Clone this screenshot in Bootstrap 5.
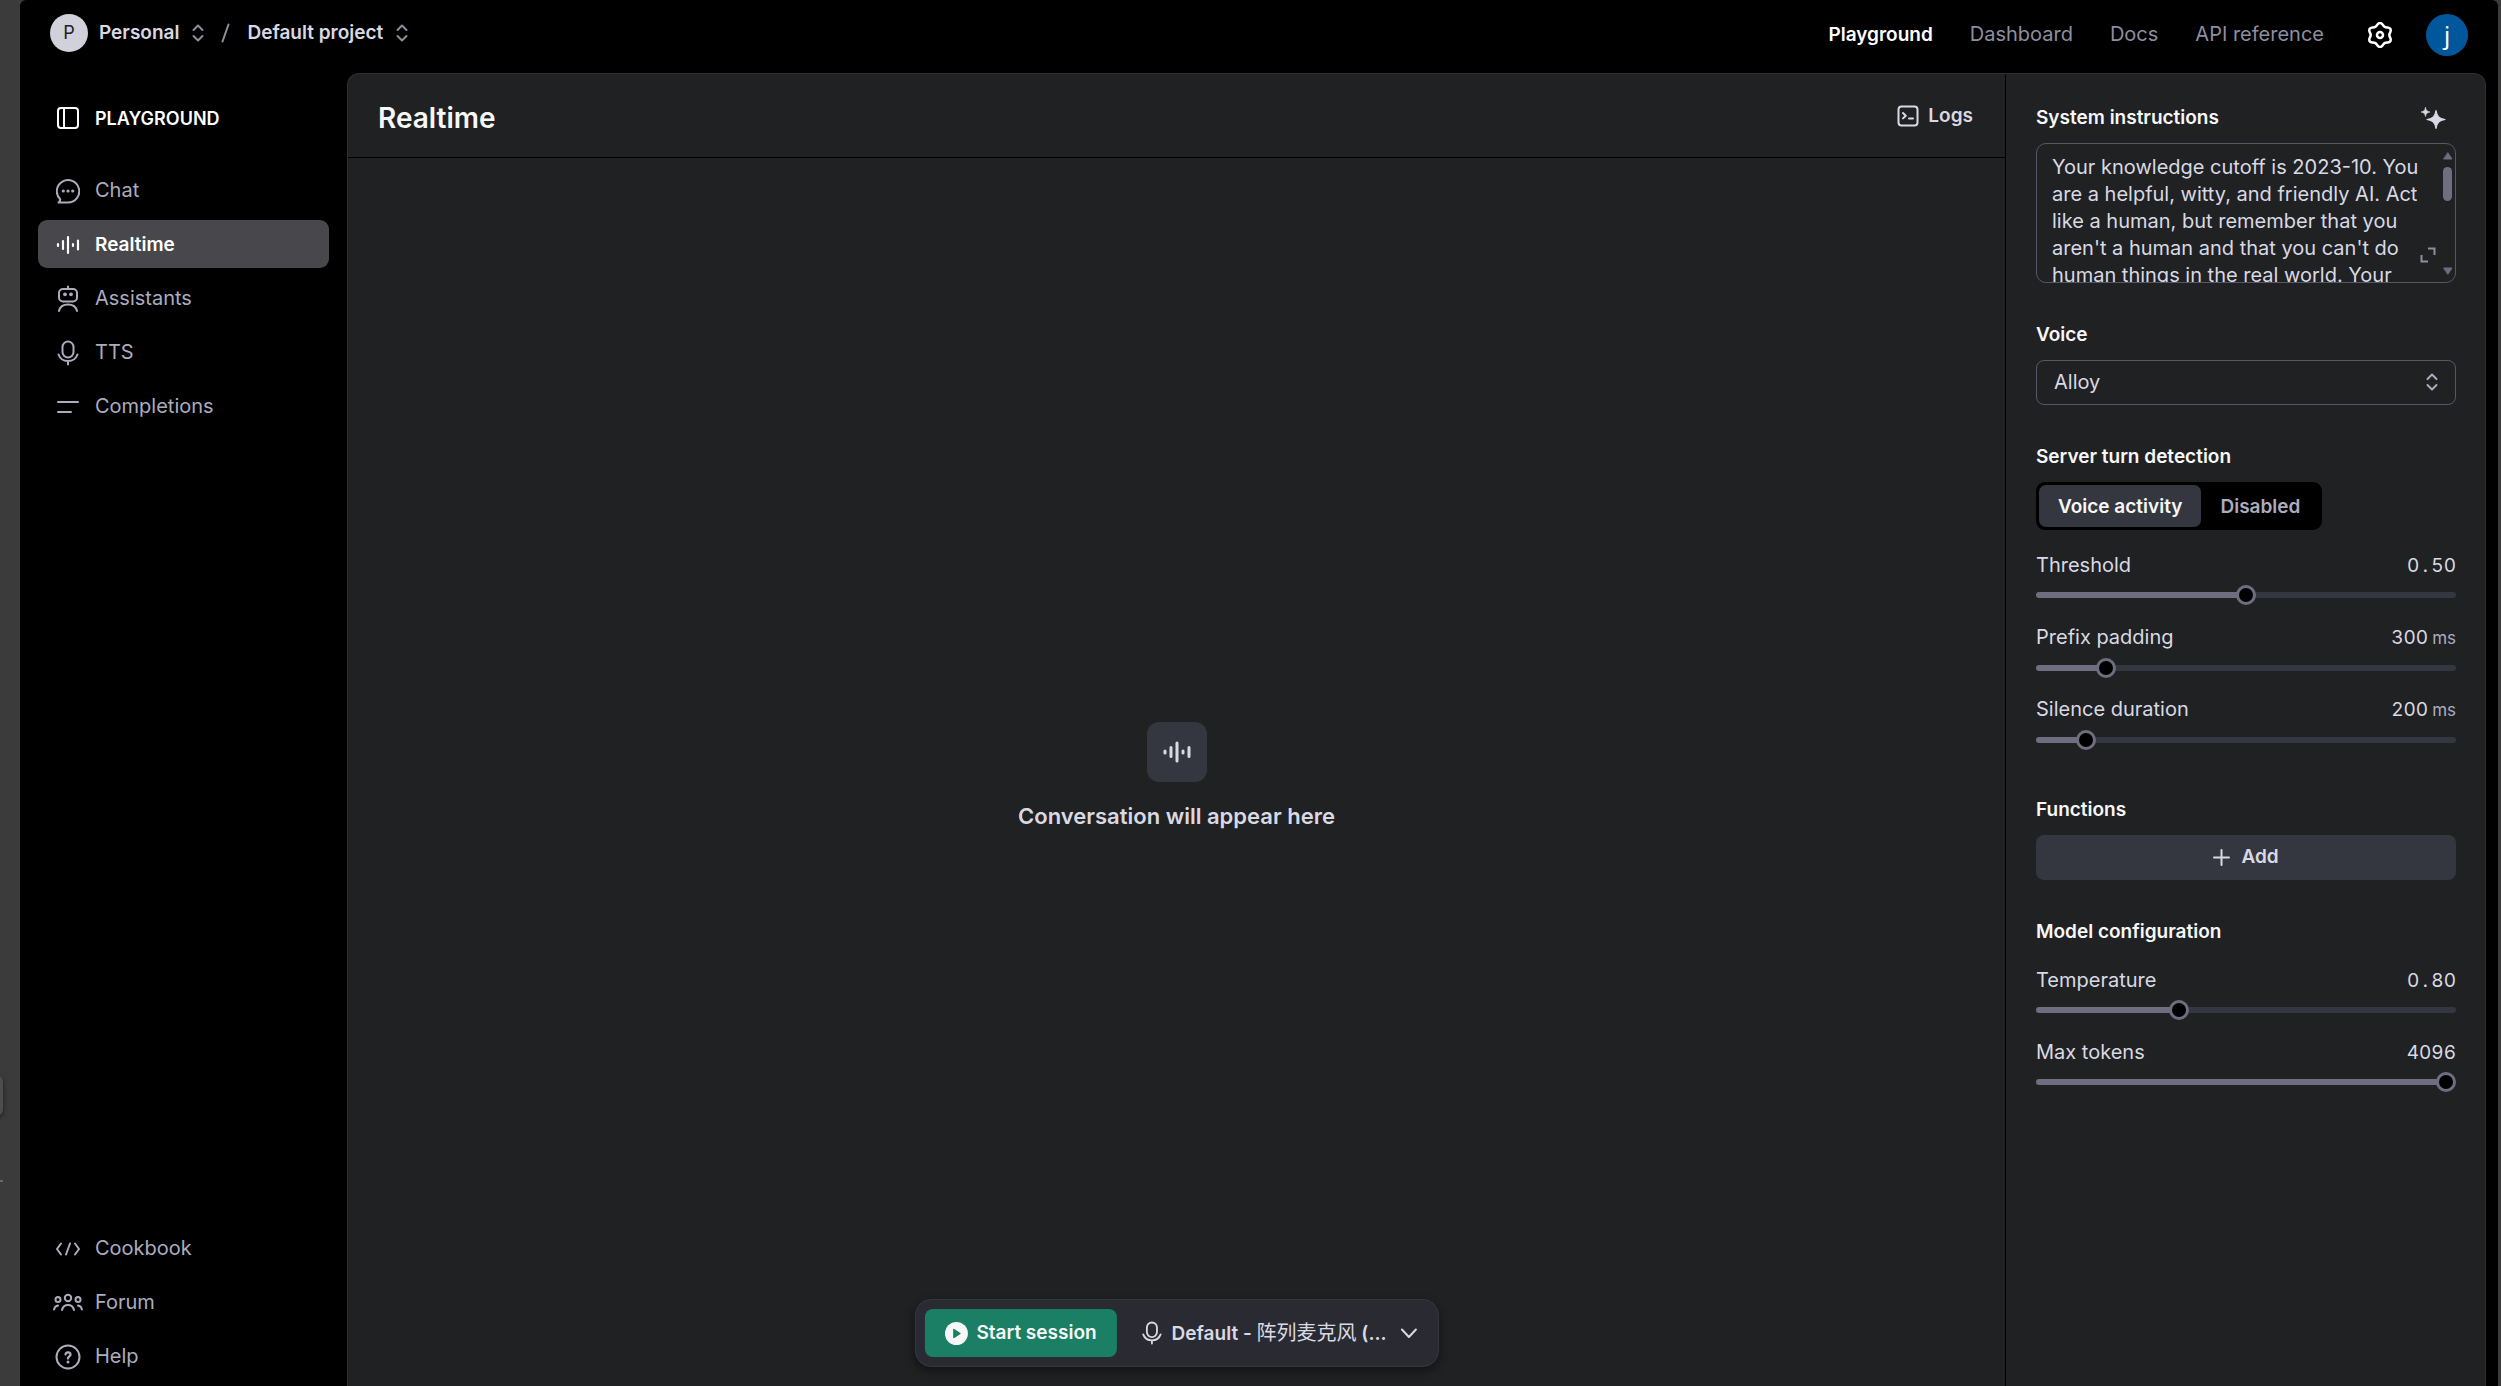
<!DOCTYPE html>
<html lang="en" data-bs-theme="dark">
<head>
<meta charset="utf-8">
<meta name="viewport" content="width=device-width, initial-scale=1">
<title>Playground - Realtime</title>
<link href="https://cdn.jsdelivr.net/npm/bootstrap@5.3.0/dist/css/bootstrap.min.css" rel="stylesheet">
<style>
  :root { --ink: #d9d9e3; --muted: #acacbe; --dim: #8e8ea0; --bright: #f7f7f8; --surface: #202123; --raised: #353740; --line: #565869; --fill: #6e6e80; }
  body { background: #3b3b3b; color: var(--ink); font: 400 20px/27px Inter, "Noto Sans CJK SC", sans-serif; }
  svg { display: block; flex: none; fill: none; stroke: currentColor; stroke-width: 2; stroke-linecap: round; stroke-linejoin: round; }
  svg.solid { fill: currentColor; stroke: none; }
  svg.bold-line { stroke-width: 3; }
  a { color: inherit; text-decoration: none; }
  .semi { font-size: 19px; font-weight: 600; }
  .app-shell { min-height: 100vh; margin: 0 3px 0 20px; background: #000; border-radius: 6px 6px 0 0; }
  .plain-btn { background: none; border: 0; padding: 0; color: inherit; }

  .top-bar { height: 73px; padding: 0 30px 8px; }
  .org-avatar { width: 38px; height: 38px; background: #d1d1db; color: #202123; font-size: 18px; margin-right: 11px; }
  .user-avatar { width: 42px; height: 42px; background: #00579b; color: #fff; font-family: "Noto Sans", sans-serif; font-size: 24px; }
  .crumb { gap: 13px; }
  .crumb svg { color: var(--dim); }
  .top-right { gap: 33px; padding-top: 4px; }
  .top-links { gap: 37px; margin-right: 10px; color: var(--dim); }
  .top-links .semi { color: #fff; }

  .side-nav { width: 327px; padding: 21px 18px 6px; color: var(--muted); }
  .side-head { height: 48px; padding-left: 18px; gap: 15px; color: #fff; font-size: 18px; font-weight: 600; margin-bottom: 24px; }
  .side-links { gap: 6px; }
  .side-links a { height: 48px; padding: 1px 0 0 18px; gap: 15px; border-radius: 9px; }
  .side-links a.active { background: #47474c; color: #fff; }

  .work-panel { background: var(--surface); border: 1px solid #2d2e36; border-bottom: 0; border-radius: 12px 12px 0 0; margin-right: 12px; }
  .pane-head { height: 84px; padding: 4px 32px 0 30px; border-bottom: 1px solid #000; }
  .pane-head h1 { font-size: 28px; line-height: 36px; font-weight: 600; color: var(--bright); }
  .log-btn { gap: 9px; }
  .empty-box { padding-top: 8px; }
  .empty-tile { width: 60px; height: 60px; border-radius: 12px; background: var(--raised); }
  .empty-text { font-size: 22px; font-weight: 600; margin-top: 21px; }
  .session-bar { bottom: 19px; height: 68px; padding: 0 9px; border: 1px solid #353740; border-radius: 16px; background: #2a2b32; box-shadow: 0 4px 10px rgba(0,0,0,.45); }
  .start-btn { height: 48px; padding: 0 20px; gap: 9px; border-radius: 8px; background: #1a7f64; color: var(--bright); }
  .start-btn:hover { background: #1a7f64; color: var(--bright); }
  .mic-btn { gap: 9px; padding: 0 11px 0 24px; white-space: nowrap; }
  .mic-btn .chev { margin-left: 4px; }
  .cjk { font-size: 20px; font-weight: 400; }

  .config-pane { width: 480px; padding: 30px 29px 30px 30px; border-left: 1px solid #000; }
  .config-pane section + section { margin-top: 38px; }
  .sec-title { display: block; font-size: 19px; line-height: 27px; font-weight: 600; color: var(--bright); margin: 0 0 12px; }
  .spark-btn { margin-right: 10px; }
  .field { border: 1px solid var(--line); border-radius: 8px; background: transparent; color: var(--ink); box-shadow: none; font-size: 20px; line-height: 27px; }
  textarea.field { height: 140px; padding: 10px 26px 0 15px; resize: none; overflow: hidden; border-radius: 10px; }
  select.field { height: 45px; padding: 0 40px 0 17px; background-image: none; }
  .over-scroll { position: absolute; top: 9px; right: 3px; color: var(--fill); }
  .over-grow { position: absolute; right: 20px; bottom: 20px; color: var(--dim); }
  .over-chev { position: absolute; right: 18px; top: 13px; color: var(--muted); pointer-events: none; }
  .seg-box { background: #000; border-radius: 9px; padding: 3px; margin-bottom: 22px; }
  .seg-box label { height: 42px; padding: 0 19px; border-radius: 7px; color: var(--muted); cursor: pointer; }
  .seg-box .btn-check:checked + label { background: var(--raised); color: var(--bright); }
  .slide-group { gap: 10px; }
  .slide-row { height: 62px; }
  .slide-row output { font-size: 19px; font-variant-numeric: tabular-nums; color: var(--ink); }
  .dot { display: inline-block; width: 12px; text-align: center; }
  .unit { font-size: 17px; color: var(--muted); margin-left: 4px; }
  .slide-row input { appearance: none; -webkit-appearance: none; display: block; width: 100%; height: 20px; margin: 6px 0 0; background: none; }
  .slide-row input::-webkit-slider-runnable-track { height: 6px; border-radius: 3px; background: linear-gradient(to right, var(--fill) var(--at), var(--raised) var(--at)); }
  .slide-row input::-webkit-slider-thumb { -webkit-appearance: none; width: 20px; height: 20px; margin-top: -7px; border: 3px solid var(--fill); border-radius: 50%; background: #000; }
  .model-title { margin-bottom: 22px; }
  .add-btn { height: 45px; gap: 11px; border-radius: 8px; background: var(--raised); color: var(--ink); }
  .add-btn:hover { background: var(--raised); color: var(--ink); }
  .edge-tab { position: absolute; left: -10px; top: 1075px; width: 13px; height: 41px; border-radius: 7px; background: #4d4d4d; box-shadow: 0 2px 5px rgba(0,0,0,.5); }
  .edge-line { position: absolute; left: 0; top: 1180px; width: 3px; height: 2px; background: #6a6a6a; }
</style>
<script src="https://cdn.jsdelivr.net/npm/bootstrap@5.3.0/dist/js/bootstrap.bundle.min.js"></script>
</head>
<body>
<svg width="0" height="0" class="position-absolute" aria-hidden="true">
  <symbol id="updown" viewBox="0 0 12 18"><path d="M1.500 6 6 1.500 10.500 6M1.500 12 6 16.500 10.500 12"/></symbol>
  <symbol id="wave" viewBox="0 0 24 24"><path d="M2 11v2M7 8v8M12 4v16M17 11v2M22 7.500v9" stroke-width="2.200"/></symbol>
  <symbol id="mic" viewBox="0 0 24 26"><rect x="6.500" y="1.500" width="11" height="16" rx="5.500"/><path d="M2.500 14.500c1.600 4.400 5 6.500 9.500 6.500s7.900-2.100 9.500-6.500M12 21v3.500"/></symbol>
</svg>
<div class="edge-tab"></div><div class="edge-line"></div>

<div class="app-shell d-flex flex-column">
  <header class="top-bar d-flex align-items-center justify-content-between">
    <div class="d-flex align-items-center">
      <span class="org-avatar rounded-circle d-flex align-items-center justify-content-center">P</span>
      <div class="d-flex align-items-center crumb">
        <button type="button" class="plain-btn semi d-flex align-items-center crumb">Personal <svg width="12" height="18"><use href="#updown"/></svg></button>
        <svg class="ms-1 me-1" width="9" height="20" viewBox="0 0 9 20"><path d="M1.500 18.500 7.500 1.500"/></svg>
        <button type="button" class="plain-btn semi d-flex align-items-center crumb">Default project <svg width="12" height="18"><use href="#updown"/></svg></button>
      </div>
    </div>
    <div class="d-flex align-items-center top-right">
      <nav class="d-flex align-items-center top-links">
        <a href="#" class="semi">Playground</a><a href="#">Dashboard</a><a href="#">Docs</a><a href="#">API reference</a>
      </nav>
      <button type="button" class="plain-btn text-white" aria-label="Settings"><svg width="26" height="26" viewBox="0 0 26 26"><path stroke-width="2.500" d="M10.260 2.760Q13-.8 15.740 2.760 17.200 5.730 20.500 5.500 24.950 6.100 23.240 10.260 21.400 13 23.240 15.740 24.950 19.900 20.500 20.500 17.200 20.270 15.740 23.240 13 26.800 10.260 23.240 8.800 20.270 5.500 20.500 1.050 19.900 2.760 15.740 4.600 13 2.760 10.260 1.050 6.100 5.500 5.500 8.800 5.730 10.260 2.760Z"/><circle cx="13" cy="13" r="3" stroke-width="2.500"/></svg></button>
      <span class="user-avatar rounded-circle d-flex align-items-center justify-content-center">j</span>
    </div>
  </header>

  <div class="d-flex flex-grow-1">
    <aside class="side-nav d-flex flex-column flex-shrink-0">
      <div class="side-head d-flex align-items-center">
        <svg width="24" height="24" viewBox="0 0 24 24"><rect x="2" y="2" width="20" height="20" rx="3"/><path d="M8 2v20"/></svg>PLAYGROUND
      </div>
      <nav class="side-links d-flex flex-column">
        <a href="#" class="d-flex align-items-center"><svg width="24" height="26" viewBox="0 0 24 26"><path d="M2.500 24.500H12A11.200 11.200 0 1 0 4.200 21.300C4.400 22.600 3.600 23.700 2.500 24.500Z"/><g fill="currentColor" stroke="none"><circle cx="7.300" cy="13" r="1.600"/><circle cx="12" cy="13" r="1.600"/><circle cx="16.700" cy="13" r="1.600"/></g></svg>Chat</a>
        <a href="#" class="d-flex align-items-center semi active"><svg width="24" height="24"><use href="#wave"/></svg>Realtime</a>
        <a href="#" class="d-flex align-items-center"><svg width="24" height="28" viewBox="0 0 24 28"><rect x="3" y="4" width="18" height="12.500" rx="4"/><path d="M12 1.500V4M3 26c1-4.500 4-6.500 9-6.500s8 2 9 6.500"/><g fill="currentColor" stroke="none"><circle cx="9" cy="9.300" r="1.900"/><circle cx="15" cy="9.300" r="1.900"/></g></svg>Assistants</a>
        <a href="#" class="d-flex align-items-center"><svg width="24" height="26"><use href="#mic"/></svg>TTS</a>
        <a href="#" class="d-flex align-items-center"><svg width="24" height="24" viewBox="0 0 24 24"><path d="M2 7h20M2 17h13"/></svg>Completions</a>
      </nav>
      <nav class="side-links d-flex flex-column mt-auto">
        <a href="#" class="d-flex align-items-center"><svg width="24" height="24" viewBox="0 0 24 24"><path d="M5 6.500 1 12l4 5.500M19 6.500 23 12l-4 5.500M14 6.500l-4 11"/></svg>Cookbook</a>
        <a href="#" class="d-flex align-items-center"><svg class="overflow-visible" width="24" height="24" viewBox="0 0 24 24"><circle cx="12" cy="7" r="3.200"/><circle cx="2" cy="8.500" r="2.500"/><circle cx="22" cy="8.500" r="2.500"/><path d="M6 19c.8-3.500 2.800-5 6-5s5.200 1.500 6 5M-2 18.500c.5-2 1.700-3.500 4-4M26 18.500c-.5-2-1.700-3.500-4-4"/></svg>Forum</a>
        <a href="#" class="d-flex align-items-center"><svg class="overflow-visible" width="24" height="24" viewBox="0 0 24 24"><circle cx="12" cy="12" r="11.500"/><path d="M9.500 9.300c.3-1.400 1.200-2 2.500-2s2.500.9 2.500 2.200c0 1.900-2.500 2-2.500 4" stroke-width="2.300"/><circle cx="12" cy="17" r="1.500" fill="currentColor" stroke="none"/></svg>Help</a>
      </nav>
    </aside>

    <div class="work-panel d-flex flex-grow-1">
      <main class="position-relative d-flex flex-column flex-grow-1">
        <div class="pane-head d-flex align-items-center justify-content-between">
          <h1 class="m-0">Realtime</h1>
          <button type="button" class="plain-btn semi d-flex align-items-center log-btn pb-1"><svg width="22" height="22" viewBox="0 0 22 22"><rect x="1.500" y="1.500" width="19" height="19" rx="3"/><path d="m6 8 2.800 2.700L6 13.400M12 13.500h4"/></svg>Logs</button>
        </div>
        <div class="empty-box d-flex flex-column flex-grow-1 align-items-center justify-content-center">
          <div class="empty-tile d-flex align-items-center justify-content-center"><svg class="bold-line" width="30" height="30" viewBox="0 0 30 30"><path d="M3 14v2M9 10.500v9M15 6v18M21 14v2M27 10.500v9"/></svg></div>
          <div class="empty-text">Conversation will appear here</div>
        </div>
        <div class="session-bar position-absolute start-50 translate-middle-x d-flex align-items-center">
          <button type="button" class="btn border-0 start-btn semi d-flex align-items-center text-nowrap"><svg class="solid" width="23" height="23" viewBox="0 0 23 23"><circle cx="11.500" cy="11.500" r="11.500"/><path d="M9 7.500v8l6-4z" fill="#1a7f64" stroke="#1a7f64" stroke-width="1.500"/></svg>Start session</button>
          <button type="button" class="plain-btn mic-btn semi d-flex align-items-center"><svg width="22" height="24"><use href="#mic"/></svg><span>Default - <span class="cjk">阵列麦克风</span> (...</span><svg class="chev" width="18" height="18" viewBox="0 0 18 18"><path d="m2 5.500 7 7.500 7-7.500"/></svg></button>
        </div>
      </main>

      <aside class="config-pane flex-shrink-0">
        <section>
          <div class="d-flex justify-content-between">
            <label class="sec-title" for="sys">System instructions</label>
            <button type="button" class="plain-btn spark-btn align-self-start" aria-label="Generate"><svg class="solid" width="26" height="26" viewBox="0 0 26 26"><path d="M16 6.500c1 6 3 8 9 9-6 1-8 3-9 9-1-6-3-8-9-9 6-1 8-3 9-9Z" stroke="currentColor" stroke-width="1.200"/><path d="M5.500 3.500c.6 3 1.500 3.900 4.500 4.500-3 .6-3.900 1.500-4.500 4.500C4.900 9.500 4 8.600 1 8c3-.6 3.900-1.500 4.500-4.500Z" stroke="currentColor" stroke-width=".6"/></svg></button>
          </div>
          <div class="position-relative">
            <textarea id="sys" class="form-control field">Your knowledge cutoff is 2023-10. You are a helpful, witty, and friendly AI. Act like a human, but remember that you aren't a human and that you can't do human things in the real world. Your voice and personality should be warm and engaging.</textarea>
            <svg class="over-scroll solid" width="10" height="124" viewBox="0 0 10 124"><path d="M5 1 9 7H1ZM5 122 9 116H1Z" stroke="currentColor" stroke-width="1"/><rect x="0" y="15" width="9" height="34" rx="4.500"/></svg>
            <svg class="over-grow" width="16" height="16" viewBox="0 0 16 16"><path d="M8 1.500h6.500V8M8 14.500H1.500V8" stroke-linejoin="miter" stroke-linecap="butt"/></svg>
          </div>
        </section>
        <section>
          <label class="sec-title" for="voice">Voice</label>
          <div class="position-relative">
            <select id="voice" class="form-select field"><option>Alloy</option></select>
            <svg class="over-chev" width="12" height="18"><use href="#updown"/></svg>
          </div>
        </section>
        <section>
          <h2 class="sec-title">Server turn detection</h2>
          <div class="d-flex"><div class="seg-box d-flex">
            <input class="btn-check" type="radio" name="turn" id="vad" checked><label class="semi d-flex align-items-center" for="vad">Voice activity</label>
            <input class="btn-check" type="radio" name="turn" id="off"><label class="semi d-flex align-items-center" for="off">Disabled</label>
          </div></div>
          <div class="slide-group d-flex flex-column">
            <div class="slide-row"><div class="d-flex justify-content-between"><label for="r1">Threshold</label><output for="r1">0<span class="dot">.</span>50</output></div><input id="r1" type="range" min="0" max="1" step="0.01" value="0.5" style="--at:50%"></div>
            <div class="slide-row"><div class="d-flex justify-content-between"><label for="r2">Prefix padding</label><output for="r2">300<span class="unit">ms</span></output></div><input id="r2" type="range" min="0" max="2000" value="300" style="--at:16%"></div>
            <div class="slide-row"><div class="d-flex justify-content-between"><label for="r3">Silence duration</label><output for="r3">200<span class="unit">ms</span></output></div><input id="r3" type="range" min="0" max="2000" value="200" style="--at:11%"></div>
          </div>
        </section>
        <section>
          <h2 class="sec-title">Functions</h2>
          <button type="button" class="btn border-0 w-100 add-btn semi d-flex align-items-center justify-content-center"><svg width="17" height="17" viewBox="0 0 17 17"><path d="M8.500 1v15M1 8.500h15"/></svg>Add</button>
        </section>
        <section>
          <h2 class="sec-title model-title">Model configuration</h2>
          <div class="slide-group d-flex flex-column">
            <div class="slide-row"><div class="d-flex justify-content-between"><label for="r4">Temperature</label><output for="r4">0<span class="dot">.</span>80</output></div><input id="r4" type="range" min="0.6" max="1.2" step="0.01" value="0.8" style="--at:34%"></div>
            <div class="slide-row"><div class="d-flex justify-content-between"><label for="r5">Max tokens</label><output for="r5">4096</output></div><input id="r5" type="range" min="1" max="4096" value="4096" style="--at:99%"></div>
          </div>
        </section>
      </aside>
    </div>
  </div>
</div>
</body>
</html>
